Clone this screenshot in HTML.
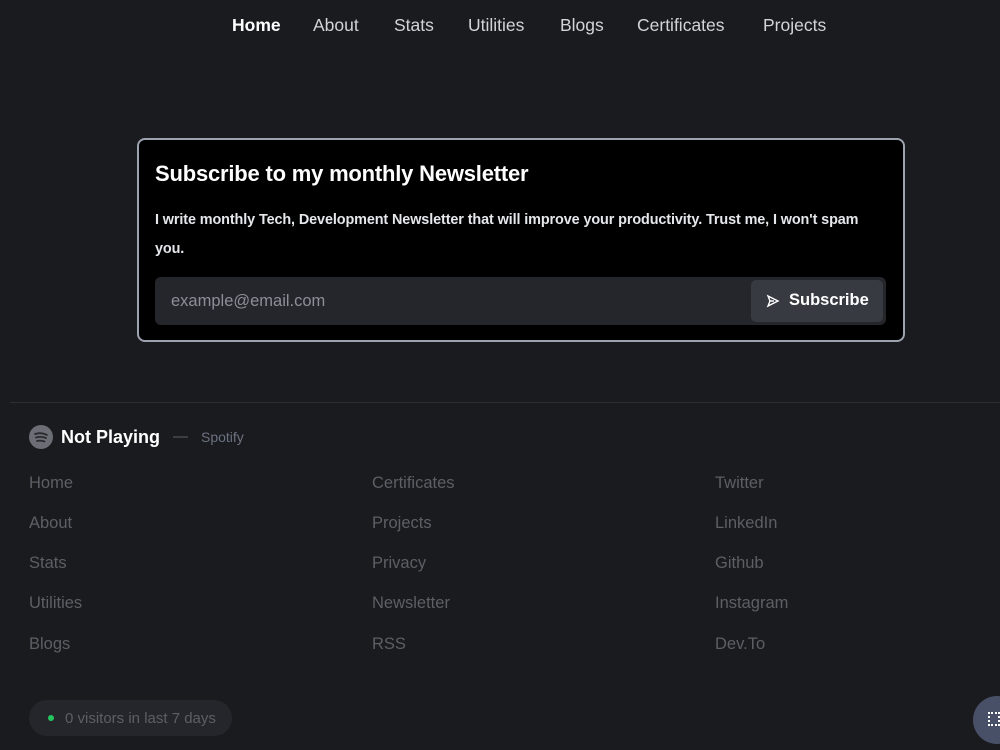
<!DOCTYPE html>
<html><head><style>
body{margin:0;width:1000px;height:750px;overflow:hidden;background:#1a1b1e;font-family:"Liberation Sans",sans-serif;position:relative}
.nav{position:absolute;top:15px;left:0;width:1000px;font-size:17.5px;color:#d4d4d8}
.nav span{position:absolute;top:0}
.card{position:absolute;left:137px;top:138px;width:768px;height:204px;background:#000;border:2px solid #9ca3af;border-radius:8px;box-sizing:border-box}
h1{position:absolute;left:16px;top:21px;margin:0;font-size:22px;color:#fff;font-weight:bold;letter-spacing:-0.2px}
.p{position:absolute;left:16px;top:66px;width:728px;font-size:14.4px;line-height:29px;color:#e5e7eb;font-weight:bold;letter-spacing:-0.1px}
.inp{position:absolute;left:16px;top:137px;width:731px;height:48px;background:#25262b;border-radius:6px}
.inp .ph{position:absolute;left:16px;top:15px;font-size:16.5px;color:#8b8f98}
.btn{position:absolute;right:3px;top:3px;width:132px;height:42px;background:#373a40;border-radius:5px;color:#fff;font-size:16.5px;font-weight:bold}
.hr{position:absolute;left:10px;right:0;top:402px;border-top:1px solid #2c2e33}
.f{position:absolute;font-size:16.5px;color:#5c5f66}
</style></head><body>
<div class="nav">
<span style="left:232px;color:#fff;font-weight:bold">Home</span>
<span style="left:313px">About</span>
<span style="left:394px">Stats</span>
<span style="left:468px">Utilities</span>
<span style="left:560px">Blogs</span>
<span style="left:637px">Certificates</span>
<span style="left:763px">Projects</span>
</div>
<div class="card">
<h1>Subscribe to my monthly Newsletter</h1>
<div class="p">I write monthly Tech, Development Newsletter that will improve your productivity. Trust me, I won't spam you.</div>
<div class="inp"><div class="ph">example@email.com</div>
<div class="btn"><svg style="position:absolute;left:15px;top:14px" width="14" height="14" viewBox="0 0 14 14"><path d="M2 2 L12 7 L2 12 L4 7 Z M4 7 H8" fill="none" stroke="#fff" stroke-width="1.4"/></svg><span style="position:absolute;left:38px;top:11px">Subscribe</span></div></div>
</div>
<div class="hr"></div>
<svg style="position:absolute;left:29px;top:425px" width="24" height="24" viewBox="0 0 24 24"><circle cx="12" cy="12" r="12" fill="#6b6e75"/><path d="M6 9 Q12 7 18 10 M7 12.5 Q12 11 17 13 M8 16 Q12 15 15.5 16.5" stroke="#2a2b2f" stroke-width="1.8" fill="none" stroke-linecap="round"/></svg>
<div style="position:absolute;left:61px;top:427px;font-size:18px;font-weight:bold;color:#fff">Not Playing</div>
<div style="position:absolute;left:173px;top:428px;font-size:15px;color:#5c5f66">—</div>
<div style="position:absolute;left:201px;top:429px;font-size:14px;color:#6b7280">Spotify</div>
<div class="f" style="left:29px;top:474px">Home</div>
<div class="f" style="left:29px;top:514px">About</div>
<div class="f" style="left:29px;top:554px">Stats</div>
<div class="f" style="left:29px;top:594px">Utilities</div>
<div class="f" style="left:29px;top:635px">Blogs</div>
<div class="f" style="left:372px;top:474px">Certificates</div>
<div class="f" style="left:372px;top:514px">Projects</div>
<div class="f" style="left:372px;top:554px">Privacy</div>
<div class="f" style="left:372px;top:594px">Newsletter</div>
<div class="f" style="left:372px;top:635px">RSS</div>
<div class="f" style="left:715px;top:474px">Twitter</div>
<div class="f" style="left:715px;top:514px">LinkedIn</div>
<div class="f" style="left:715px;top:554px">Github</div>
<div class="f" style="left:715px;top:594px">Instagram</div>
<div class="f" style="left:715px;top:635px">Dev.To</div>
<div style="position:absolute;left:29px;top:700px;width:203px;height:36px;background:#25262b;border-radius:18px">
<div style="position:absolute;left:19px;top:15px;width:6px;height:6px;border-radius:3px;background:#22c55e"></div>
<div style="position:absolute;left:36px;top:10px;font-size:15px;color:#5c5f66">0 visitors in last 7 days</div></div>
<div style="position:absolute;left:973px;top:696px;width:48px;height:48px;border-radius:24px;background:#475066"></div>
<div style="position:absolute;left:988px;top:712px;width:12px;height:14px;border:2px dotted #fff;box-sizing:border-box"></div>
</body></html>
